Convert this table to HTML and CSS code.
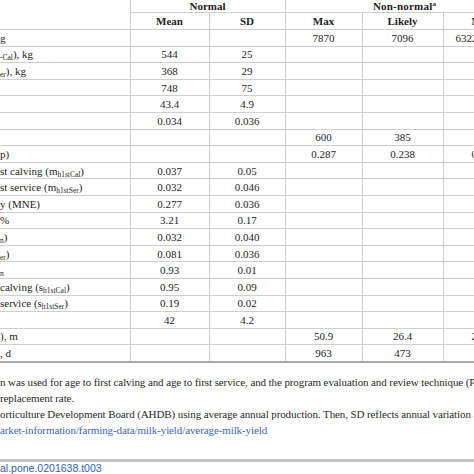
FILE: index.html
```html
<!DOCTYPE html>
<html>
<head>
<meta charset="utf-8">
<link rel="stylesheet" href="styles.css">
</head>
<body>
<div class="page">
  <table class="data">
    <colgroup>
      <col class="c-label"><col class="c-mean"><col class="c-sd"><col class="c-max"><col class="c-likely"><col class="c-min">
    </colgroup>
    <thead>
      <tr class="h1">
        <th rowspan="2" class="lab"></th>
        <th colspan="2">Normal</th>
        <th colspan="3" class="nn">Non-normal<sup>a</sup></th>
      </tr>
      <tr class="h2">
        <th>Mean</th><th>SD</th><th>Max</th><th>Likely</th><th class="hi">Min</th>
      </tr>
    </thead>
    <tbody>
      <tr><td class="lab">g</td><td></td><td></td><td>7870</td><td>7096</td><td class="lo">6322</td></tr>
      <tr><td class="lab"><sub>-Cal</sub>), kg</td><td>544</td><td>25</td><td></td><td></td><td></td></tr>
      <tr><td class="lab"><sub>er</sub>), kg</td><td>368</td><td>29</td><td></td><td></td><td></td></tr>
      <tr><td class="lab"></td><td>748</td><td>75</td><td></td><td></td><td></td></tr>
      <tr><td class="lab"></td><td>43.4</td><td>4.9</td><td></td><td></td><td></td></tr>
      <tr><td class="lab"></td><td>0.034</td><td>0.036</td><td></td><td></td><td></td></tr>
      <tr><td class="lab"></td><td></td><td></td><td>600</td><td>385</td><td></td></tr>
      <tr><td class="lab">p)</td><td></td><td></td><td>0.287</td><td>0.238</td><td class="hi">0.189</td></tr>
      <tr><td class="lab">st calving (m<sub>h1stCal</sub>)</td><td>0.037</td><td>0.05</td><td></td><td></td><td></td></tr>
      <tr><td class="lab">st service (m<sub>h1stSer</sub>)</td><td>0.032</td><td>0.046</td><td></td><td></td><td></td></tr>
      <tr><td class="lab">y (MNE)</td><td>0.277</td><td>0.036</td><td></td><td></td><td></td></tr>
      <tr><td class="lab">%</td><td>3.21</td><td>0.17</td><td></td><td></td><td></td></tr>
      <tr><td class="lab"><sub>n</sub>)</td><td>0.032</td><td>0.040</td><td></td><td></td><td></td></tr>
      <tr><td class="lab"><sub>er</sub>)</td><td>0.081</td><td>0.036</td><td></td><td></td><td></td></tr>
      <tr><td class="lab"><sub>n</sub></td><td>0.93</td><td>0.01</td><td></td><td></td><td></td></tr>
      <tr><td class="lab">calving (s<sub>h1stCal</sub>)</td><td>0.95</td><td>0.09</td><td></td><td></td><td></td></tr>
      <tr><td class="lab">service (s<sub>h1stSer</sub>)</td><td>0.19</td><td>0.02</td><td></td><td></td><td></td></tr>
      <tr><td class="lab"></td><td>42</td><td>4.2</td><td></td><td></td><td></td></tr>
      <tr><td class="lab">), m</td><td></td><td></td><td>50.9</td><td>26.4</td><td class="hi">2.1</td></tr>
      <tr><td class="lab">, d</td><td></td><td></td><td>963</td><td>473</td><td></td></tr>
    </tbody>
  </table>
  <div class="notes">
    <p class="note">n was used for age to first calving and age to first service, and the program evaluation and review technique (PERT)</p>
    <p class="note">replacement rate.</p>
    <p class="note">orticulture Development Board (AHDB) using average annual production. Then, SD reflects annual variation across</p>
    <p class="note"><a class="link" href="#">arket-information/farming-data/milk-yield/average-milk-yield</a></p>
  </div>
  <div class="doi">al.pone.0201638.t003</div>
</div>
</body>
</html>
```

FILE: styles.css
```css
html, body {
  margin: 0;
  padding: 0;
  background: #ffffff;
  overflow: hidden;
}

.page {
  width: 474px;
  height: 474px;
  overflow: hidden;
  font-family: "Liberation Serif", "Times New Roman", serif;
  color: #1e1e1e;
}

.data {
  border-collapse: collapse;
  table-layout: fixed;
  width: 524px;
  margin-top: 0;
  font-size: 11px;
}

.c-label { width: 130px; }
.c-mean { width: 79px; }
.c-sd { width: 76px; }
.c-max { width: 77px; }
.c-likely { width: 81px; }
.c-min { width: 81px; }

.data th,
.data td {
  padding: 0;
  text-align: center;
  vertical-align: middle;
  border: 1px solid #cfcfcf;
  white-space: nowrap;
  overflow: hidden;
  line-height: 12px;
}

.data th {
  font-weight: bold;
}

.h1 th {
  height: 12px;
  border-top: none;
}

.h2 th {
  height: 16px;
}

.data tbody td {
  height: 15.6px;
}

.data tbody tr:last-child td {
  border-bottom: 2px solid #a8a8a8;
}

.data .lab {
  text-align: left;
  border-left: none;
}

.data .nn {
  letter-spacing: 0.2px;
}

.data sup {
  font-size: 7px;
  vertical-align: 4px;
  line-height: 0;
}

.data sub {
  font-size: 7.5px;
  vertical-align: -2px;
  line-height: 0;
}

.data .lo {
  text-align: left;
  padding-left: 12px;
}

.data .hi {
  text-align: left;
  padding-left: 28px;
}

.notes {
  padding-top: 11px;
  padding-bottom: 21px;
  border-bottom: 3px solid #c4c4c4;
}

.note {
  margin: 0;
  font-size: 11px;
  letter-spacing: -0.1px;
  line-height: 16px;
  white-space: nowrap;
  overflow: hidden;
  color: #2a2a2a;
}

.link {
  color: #3b66c4;
  text-decoration: none;
}

.doi {
  margin-top: 1px;
  font-family: "Liberation Sans", Arial, sans-serif;
  font-size: 10.5px;
  line-height: 11px;
  color: #2f62b8;
  white-space: nowrap;
}
```
